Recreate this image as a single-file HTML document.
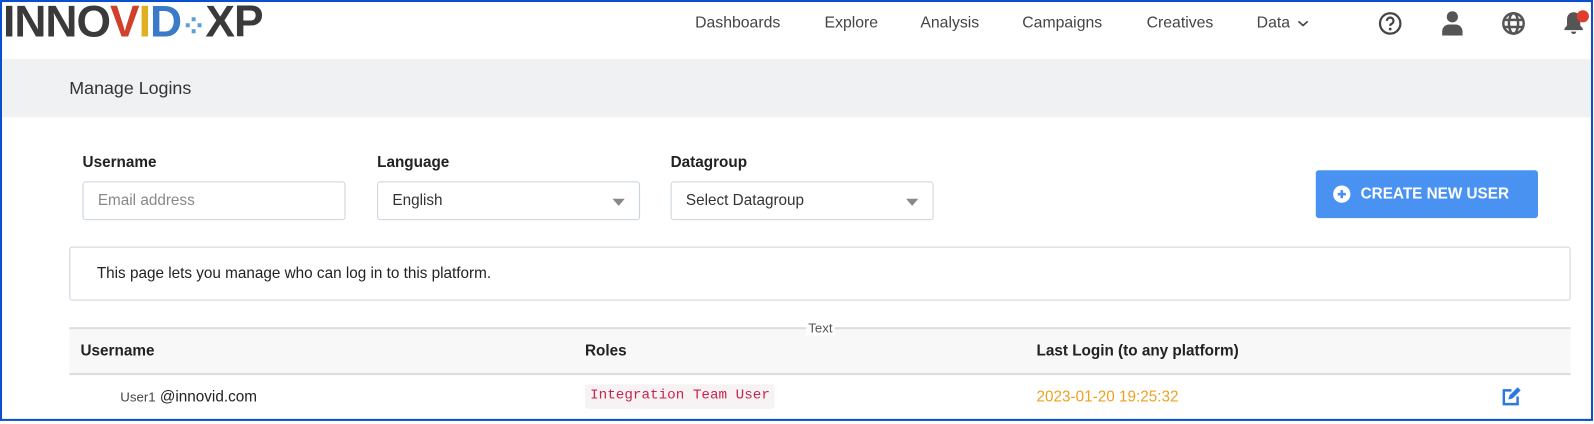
<!DOCTYPE html>
<html><head><meta charset="utf-8"><style>
*{box-sizing:border-box;margin:0;padding:0}
body{width:1594px;height:424px;background:#fff;font-family:"Liberation Sans",sans-serif;overflow:hidden;color:#222}
#w{position:relative;width:1564px;height:416px;transform:scale(1.0192);transform-origin:0 0}
.frame{position:absolute;left:0;top:0;width:1563px;height:413px;border:2px solid #0a4fd0;}
.a{position:absolute;white-space:nowrap}
.nav{font-size:15.5px;color:#444;top:14px}
.band{position:absolute;left:2px;top:58px;width:1559px;height:57px;background:#f0f1f2}
.lbl{font-size:15px;font-weight:bold;color:#222;top:151px}
.inp{position:absolute;top:178px;height:38px;border:1px solid #c9d3dd;border-radius:3px;font-size:15px;padding:9px 14px;color:#333}
.tri{position:absolute;right:14px;top:16px;width:0;height:0;border-left:6px solid transparent;border-right:6px solid transparent;border-top:7px solid #888}
</style></head><body><div id="w">
<div class="frame"></div>
<div class="a" style="left:3px;top:0px;font-size:44px;font-weight:bold;color:#3a3a3a;letter-spacing:-1px;line-height:44px;transform:scaleX(0.99);transform-origin:0 0">INNO<span style="color:#d0402a">V</span><span style="color:#e0b020">I</span><span style="color:#3a7ac8">D</span><span style="color:#5aa0d0;font-size:30px">⁘</span>XP</div>
<div class="a nav" style="left:682px">Dashboards</div>
<div class="a nav" style="left:809px">Explore</div>
<div class="a nav" style="left:903px">Analysis</div>
<div class="a nav" style="left:1003px">Campaigns</div>
<div class="a nav" style="left:1125px">Creatives</div>
<div class="a nav" style="left:1233px">Data <svg width="11" height="8" viewBox="0 0 11 8" style="margin-left:3px"><path d="M1 2l4.5 4 4.5-4" stroke="#444" stroke-width="1.6" fill="none"/></svg></div>
<svg class="a" style="left:1352px;top:11px" width="24" height="24" viewBox="0 0 24 24"><circle cx="12" cy="12" r="10" stroke="#444" stroke-width="2.2" fill="none"/><path d="M8.8 9.5a3.2 3.2 0 1 1 4.5 2.9c-.9.5-1.3 1-1.3 2" stroke="#444" stroke-width="2.2" fill="none"/><circle cx="12" cy="17.5" r="1.4" fill="#444"/></svg>
<svg class="a" style="left:1413px;top:10px" width="24" height="25" viewBox="0 0 24 25"><circle cx="12" cy="6.5" r="5.5" fill="#555"/><path d="M2 25v-4c0-4 3-7 7-7h6c4 0 7 3 7 7v4z" fill="#555"/></svg>
<svg class="a" style="left:1473px;top:11px" width="24" height="24" viewBox="0 0 24 24" fill="none" stroke="#555" stroke-width="2.4"><circle cx="12" cy="12" r="10"/><ellipse cx="12" cy="12" rx="4.5" ry="10"/><path d="M2 8.5h20M2 15.5h20"/></svg>
<svg class="a" style="left:1533px;top:8px" width="30" height="28" viewBox="0 0 30 28"><path d="M11 4c-4 0-6.5 3-6.5 7v6l-2.5 3v1.5h18V20l-2.5-3v-6c0-4-2.5-7-6.5-7z" fill="#555"/><path d="M8.5 23a2.5 2.5 0 0 0 5 0z" fill="#555"/><circle cx="20" cy="8" r="6" fill="#dc3d2e"/></svg>
<div class="band"></div>
<div class="a" style="left:68px;top:76px;font-size:17.5px;color:#333">Manage Logins</div>
<div class="a lbl" style="left:81px">Username</div>
<div class="a lbl" style="left:370px">Language</div>
<div class="a lbl" style="left:658px">Datagroup</div>
<div class="inp" style="left:81px;width:258px;color:#888">Email address</div>
<div class="inp" style="left:370px;width:258px">English<div class="tri"></div></div>
<div class="inp" style="left:658px;width:258px">Select Datagroup<div class="tri"></div></div>
<div class="a" style="left:1291px;top:167px;width:218px;height:47px;background:#4a92f2;border-radius:3px;color:#fff;font-weight:bold;font-size:15px;line-height:47px;padding-left:44px">CREATE NEW USER</div>
<svg class="a" style="left:1308px;top:182px" width="17" height="17" viewBox="0 0 17 17"><circle cx="8.5" cy="8.5" r="8.5" fill="#fff"/><path d="M8.5 4.5v8M4.5 8.5h8" stroke="#4a92f2" stroke-width="2.6"/></svg>
<div class="a" style="left:68px;top:242px;width:1473px;height:53px;border:1px solid #c9d3dd;border-radius:3px;font-size:15px;padding:17px 0 0 26px;color:#222">This page lets you manage who can log in to this platform.</div>
<div class="a" style="left:68px;top:321px;width:1473px;height:47px;background:#f8f8f8;border-top:2px solid #ddd;border-bottom:2px solid #ddd"></div>
<div class="a" style="left:791px;top:314px;font-size:13px;color:#555;background:#fff;padding:0 2px">Text</div>
<div class="a" style="left:79px;top:336px;font-size:15px;font-weight:bold">Username</div>
<div class="a" style="left:574px;top:336px;font-size:15px;font-weight:bold">Roles</div>
<div class="a" style="left:1017px;top:336px;font-size:15px;font-weight:bold">Last Login (to any platform)</div>
<div class="a" style="left:118px;top:381px;font-size:15px"><span style="font-size:13px;color:#444">User1</span> @innovid.com</div>
<div class="a" style="left:574px;top:377px;height:24px;background:#f7f3f5;border-radius:3px;padding:3px 5px;font-family:'Liberation Mono',monospace;font-size:14px;color:#c7254e">Integration Team User</div>
<div class="a" style="left:1017px;top:381px;font-size:15px;color:#f0a020">2023-01-20 19:25:32</div>
<svg class="a" style="left:1473px;top:380px" width="20" height="18" viewBox="0 0 20 18"><path d="M10 3H2.5v13.5H16V9" stroke="#2a78e0" stroke-width="2.4" fill="none"/><path d="M7 12l1-4 8-8 3 3-8 8z" fill="#2a78e0"/></svg>
</div></body></html>
